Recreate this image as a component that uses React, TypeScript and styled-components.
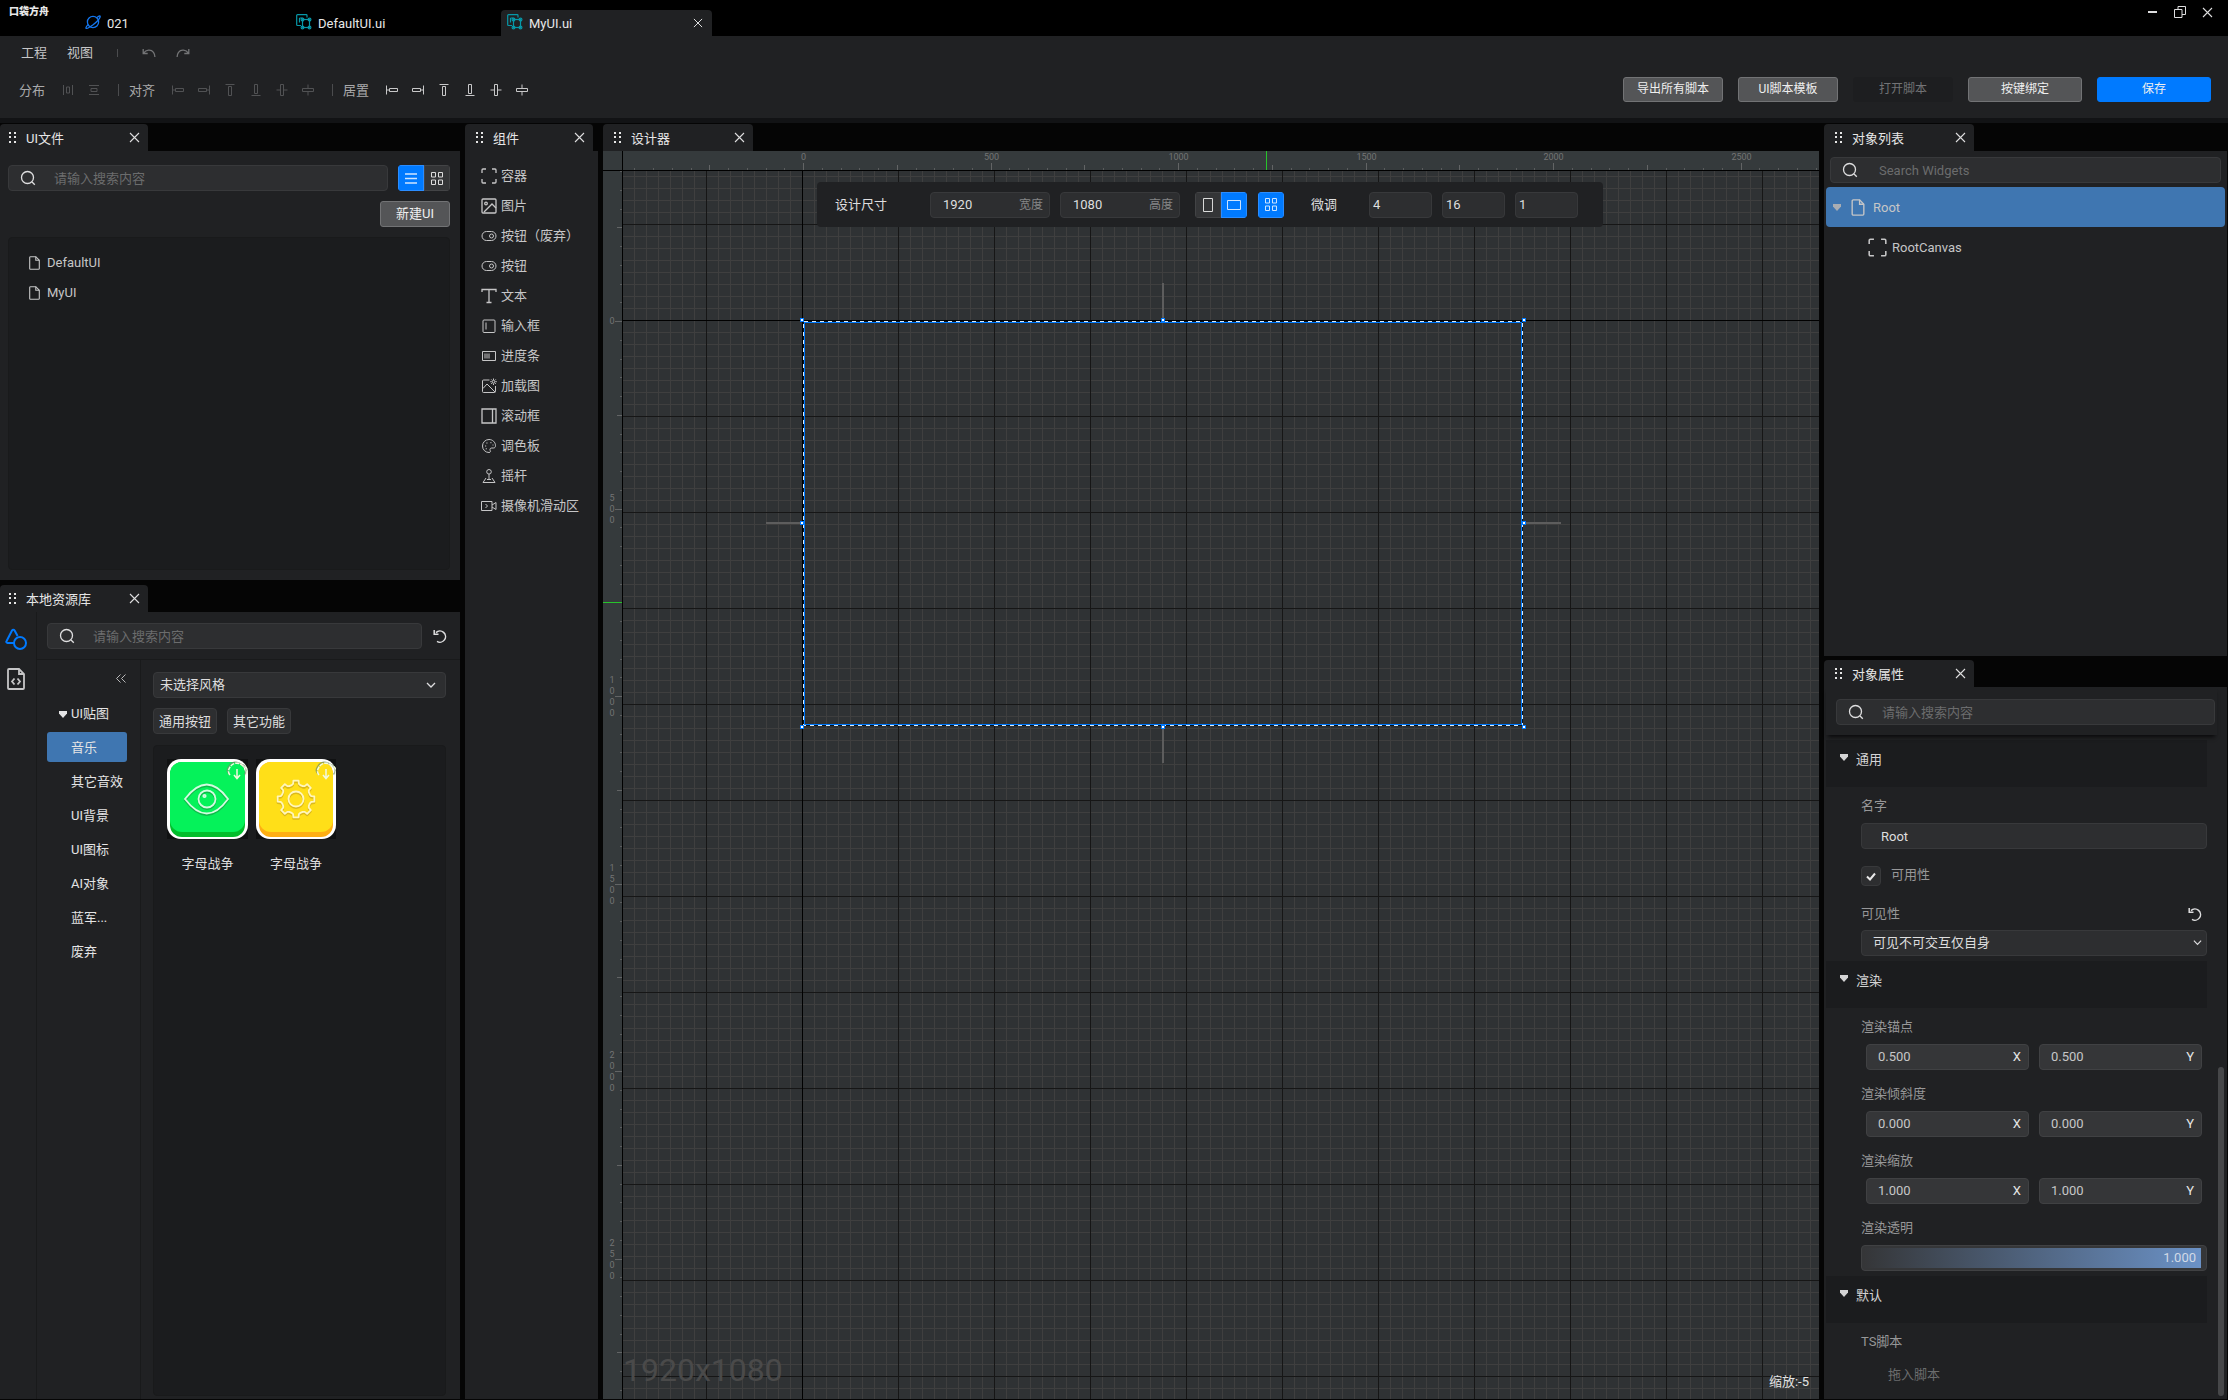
import React, { useEffect, useRef, useState } from 'react';
import styled, { createGlobalStyle, css } from 'styled-components';

const color = {
  app: '#050505',
  panel: '#202123',
  sunken: '#1b1c1e',
  line: '#191a1b',
  field: '#2d2e30',
  fieldLine: '#38393b',
  text: '#dededf',
  soft: '#c6c6c7',
  label: '#979798',
  faint: '#6b6c6d',
  blue: '#007aff',
  row: '#3f76b1',
};

const Global = createGlobalStyle`
  *, *::before, *::after { box-sizing: border-box; }
  body { margin: 0; background: ${color.app}; }
  body, button, input, select {
    font-family: Roboto, "Noto Sans CJK SC", sans-serif;
    font-size: 13px;
    line-height: 20px;
    color: ${color.text};
  }
  button { padding: 0; border: 0; background: none; cursor: pointer; }
  button:disabled { cursor: default; }
  ul { margin: 0; padding: 0; list-style: none; }
  svg { display: block; flex: none; }
`;

/* ---------- icons ---------- */

type IconProps = { w?: number; h?: number; box?: string; sw?: number; children?: React.ReactNode };

const Icon = ({ w = 14, h = w, box = `0 0 ${w} ${h}`, sw = 1, children }: IconProps) => (
  <svg width={w} height={h} viewBox={box} fill="none" stroke="currentColor" strokeWidth={sw} aria-hidden="true">
    {children}
  </svg>
);

const CloseIcon = ({ s = 11 }: { s?: number }) => (
  <Icon w={s} box="0 0 11 11" sw={1.1}><path d="M1 1l9 9M10 1l-9 9" /></Icon>
);
const GripIcon = () => (
  <svg width="8" height="11" viewBox="0 0 8 11" fill="currentColor" aria-hidden="true">
    {[0, 4, 9].map((y) => [0, 5].map((x) => <rect key={`${x}-${y}`} x={x} y={y} width="2" height="2" />))}
  </svg>
);
const SearchIcon = () => (
  <Icon w={16} sw={1.3}><circle cx="7.5" cy="7.5" r="6" /><path d="M12 12l2.8 2.8" /></Icon>
);
const ResetIcon = () => (
  <Icon w={14} sw={1.5}>
    <path d="M3 3.6A5.6 5.6 0 1 1 4 12.4" />
    <path d="M1.2 1v4.2h4.3" />
  </Icon>
);
const ChevronIcon = ({ s = 10 }: { s?: number }) => (
  <Icon w={s} h={s} box="0 0 10 10" sw={1.3}><path d="M1 3l4 4 4-4" /></Icon>
);
const TriangleIcon = () => (
  <svg width="8" height="7" viewBox="0 0 8 7" fill="currentColor" aria-hidden="true"><path d="M0 0h8v2.4L4 7 0 2.4z" /></svg>
);
const FileIcon = ({ w = 11, h = 14 }: { w?: number; h?: number }) => (
  <Icon w={w} h={h} box="0 0 11 14" sw={1.1}>
    <path d="M1.6.7h5.2l3.5 3.6v8.1a.9.9 0 0 1-.9.9H1.6a.9.9 0 0 1-.9-.9V1.6a.9.9 0 0 1 .9-.9z" />
    <path d="M6.8.7v3.6h3.5" />
  </Icon>
);
const PlanetIcon = () => (
  <Icon w={16} sw={1.3}>
    <circle cx="8" cy="8" r="5.6" />
    <path d="M12 3.500C14.300 1.600 15.500 1.500 15.100 3c-.5 2-3.500 5-7 7.800C4.800 13.200 1.500 15.200 1 14.200.7 13.500 1.600 12 3.300 10.400" />
  </Icon>
);
const UiFileIcon = () => (
  <Icon w={16} sw={1.2}>
    <path d="M5 11.500H1.500a.8.8 0 0 1-.8-.8V1.500a.8.8 0 0 1 .8-.8h8.700a.8.8 0 0 1 .8.8V3.500" />
    <path d="M3.500 8.500V4M3.500 4h3" />
    <rect x="6.500" y="5.500" width="7" height="8" />
    <circle cx="6.500" cy="5.500" r="1.400" /><circle cx="13.500" cy="5.500" r="1.400" />
    <circle cx="6.500" cy="13.500" r="1.400" /><circle cx="13.500" cy="13.500" r="1.400" />
  </Icon>
);
const UndoIcon = () => (
  <Icon w={14} h={10} sw={1.3}><path d="M1.200 1v4.500h4.500M1.600 5.200C4 1.600 9 1 11.500 4.300c1 1.400 1.400 3 1.400 4.700" /></Icon>
);
const RedoIcon = () => (
  <Icon w={14} h={10} sw={1.3}><path d="M12.800 1v4.500H8.300M12.400 5.200C10 1.600 5 1 2.500 4.300 1.500 5.700 1.100 7.300 1.100 9" /></Icon>
);

const alignPaths: Record<string, React.ReactNode> = {
  spreadH: <path d="M1.500 1v10M10.500 1v10M4.500 3h3v6h-3z" />,
  spreadV: <path d="M1 1.500h10M1 10.500h10M3 4.500h6v3H3z" />,
  left: <path d="M.5 1.500v9M3.500 4.500h8v3h-8z M.5 6h3" />,
  right: <path d="M11.500 1.500v9M.5 4.500h8v3h-8z M8.500 6h3" />,
  top: <path d="M1.500 .5h9M4.500 2.500h3v9h-3z" />,
  bottom: <path d="M1.500 11.500h9M4.500 .5h3v9h-3z" />,
  middle: <path d="M.5 6h4M7.500 6h4M4.500 .5h3v11h-3z" />,
  center: <path d="M6 .5v4M6 7.500v4M.5 4.500h11v3H.5z" />,
};
const AlignIcon = ({ kind }: { kind: string }) => <Icon w={12}>{alignPaths[kind]}</Icon>;

const FrameIcon = ({ s = 16 }: { s?: number }) => (
  <Icon w={s} box="0 0 16 16" sw={1.3}><path d="M1 5V2a1 1 0 0 1 1-1h3M11 1h3a1 1 0 0 1 1 1v3M15 11v3a1 1 0 0 1-1 1h-3M5 15H2a1 1 0 0 1-1-1v-3" /></Icon>
);
const ButtonIcon = () => (
  <Icon w={16}><rect x="1" y="3.500" width="14" height="9" rx="4.500" /><circle cx="10.500" cy="8" r="2" /></Icon>
);
const GridIcon = () => (
  <Icon w={12} h={13}><path d="M.5.500h4v4.500h-4zM7.500.500h4v4.500h-4zM.5 8h4v4.500h-4zM7.500 8h4v4.500h-4z" /></Icon>
);
const ListIcon = () => <Icon w={12} h={11} sw={1.5}><path d="M0 1h12M0 5.500h12M0 10h12" /></Icon>;

const widgets: { name: string; icon: React.ReactNode }[] = [
  { name: '容器', icon: <FrameIcon /> },
  {
    name: '图片',
    icon: <Icon w={16} sw={1.300}><rect x="1" y="1" width="14" height="14" rx="1" /><circle cx="5" cy="5.500" r="1.300" /><path d="M3 14l8-8 4 4" /></Icon>,
  },
  { name: '按钮（废弃）', icon: <ButtonIcon /> },
  { name: '按钮', icon: <ButtonIcon /> },
  { name: '文本', icon: <Icon w={16} sw={1.300}><path d="M1 4V1.500h14V4M8 1.500v13M5.500 14.500h5" /></Icon> },
  { name: '输入框', icon: <Icon w={16}><rect x="2" y="2" width="12" height="12.500" rx="1" /><path d="M5 4.500v7" /></Icon> },
  { name: '进度条', icon: <Icon w={16}><path d="M1.500 3.500h13v9h-13zM4 5.500v5M6 5.500v5M8 5.500v5" /></Icon> },
  {
    name: '加载图',
    icon: <Icon w={16}><path d="M8.500 2H2.500a1 1 0 0 0-1 1v10.500a1 1 0 0 0 1 1h11a1 1 0 0 0 1-1V8" /><path d="M2 10.500l4-4.500 8 8M12.500.500v1.500M12.500 5.500V7M9.200 3.700h1.500M14.300 3.700h1.500M10.200 1.400l1 1M14.800 1.400l-1 1M10.200 6l1-1M14.800 6l-1-1" /><circle cx="12.500" cy="3.700" r="1.300" /></Icon>,
  },
  { name: '滚动框', icon: <Icon w={16} sw={1.300}><path d="M1 1h14v14H1zM11.500 1v14" /></Icon> },
  {
    name: '调色板',
    icon: <Icon w={16}><path d="M8 1.500a6.500 6.500 0 1 0 0 13c1.600 0 1.700-1.200 1.200-2-.7-1.400.2-2.500 1.600-2.500h1.700c1.300 0 2-1 2-2.300C14.500 4.200 11.600 1.500 8 1.500z" /><path d="M4 8h1.200M5.300 5h1.200M9.300 4.700h1.200M4.700 10.800h1.200M11.500 7h1" /></Icon>,
  },
  {
    name: '摇杆',
    icon: <Icon w={16}><circle cx="8" cy="3.800" r="2.300" /><path d="M8 6.100v5M5 10l-3 4.500h12L11 10M6 11.500h4" /></Icon>,
  },
  {
    name: '摄像机滑动区',
    icon: <Icon w={16}><path d="M.500 3.500h10.500v9H.500zM11 7l4-2.500v7L11 9M4.500 6l2 2-2 2" /></Icon>,
  },
];

/* ---------- frame ---------- */

const Shell = styled.div`
  display: flex;
  flex-direction: column;
  height: 100vh;
  min-height: 900px;
  min-width: 1400px;
  background: ${color.app};
  overflow: hidden;
`;

const TitleBar = styled.header`
  display: flex;
  align-items: flex-end;
  height: 36px;
  background: #000;
`;
const Logo = styled.div`
  align-self: flex-start;
  width: 79px;
  padding: 4px 0 0 9px;
  font-size: 10px;
  line-height: 16px;
  font-weight: 900;
  color: #e8e8e8;
`;
const FileTab = styled.div<{ $active?: boolean; $tint: string }>`
  display: flex;
  align-items: center;
  gap: 6px;
  width: 211px;
  height: 26px;
  padding: 2px 9px 0 6px;
  border-radius: 4px 4px 0 0;
  color: #e8e8e8;
  background: ${(p) => (p.$active ? color.panel : 'transparent')};
  > svg { color: ${(p) => p.$tint}; margin-bottom: 4px; }
  > button { margin: 0 0 3px auto; }
`;
const WindowButtons = styled.div`
  display: flex;
  align-items: center;
  align-self: flex-start;
  gap: 16px;
  height: 24px;
  margin-left: auto;
  padding-right: 15px;
`;

const Head = styled.div`
  height: 87px;
  padding: 7px 17px 0 19px;
  border-bottom: 5px solid #121315;
  background: ${color.panel};
`;
const MenuRow = styled.nav`
  display: flex;
  align-items: center;
  gap: 20px;
  height: 20px;
  padding-left: 2px;
  color: ${color.soft};
  button { color: inherit; }
`;
const Rule = styled.span<{ $h: number }>`
  width: 1px;
  height: ${(p) => p.$h}px;
  background: #4b4c4e;
`;
const MenuRule = styled(Rule)`margin: 0 4px;`;
const HistoryButtons = styled.div`
  display: flex;
  gap: 20px;
  color: #737476;
`;
const ToolRow = styled.div`
  display: flex;
  align-items: center;
  height: 26px;
  margin-top: 14px;
`;
const ToolGroup = styled.div<{ $dim?: boolean }>`
  display: flex;
  align-items: center;
  color: #a9a9aa;
  > span { padding-top: 2px; }
  > div {
    display: flex;
    gap: 14px;
    margin-left: 17px;
    color: ${(p) => (p.$dim ? '#515254' : '#c8c8c9')};
  }
  > div button { color: inherit; &:disabled { color: inherit; } }
`;
const GroupRule = styled(Rule)`margin: 0 10px 0 18px;`;
const Actions = styled.div`
  display: flex;
  align-self: flex-start;
  gap: 15px;
  margin-left: auto;
`;
const PushButton = styled.button<{ $w: number; $primary?: boolean; $small?: boolean }>`
  width: ${(p) => p.$w}px;
  height: ${(p) => (p.$small ? 25 : 26)}px;
  border: 1px solid #727375;
  border-radius: 3px;
  background: #545557;
  color: #efefef;
  font-size: ${(p) => (p.$small ? 12 : 13)}px;
  line-height: 20px;
  ${(p) => p.$small && css`padding-bottom: 2px;`}
  ${(p) => p.$primary && css`background: ${color.blue}; border-color: ${color.blue};`}
  &:disabled { background: #1d1e20; border-color: #1d1e20; color: #727375; }
`;

const Workspace = styled.main`
  flex: 1;
  display: flex;
  gap: 5px;
  min-height: 0;
  padding: 1px 1px 1px 0;
`;
const Column = styled.div<{ $w?: number; $gap?: number }>`
  display: flex;
  flex-direction: column;
  gap: ${(p) => p.$gap ?? 5}px;
  min-width: 0;
  flex: ${(p) => (p.$w ? `0 0 ${p.$w}px` : '1 1 0')};
`;
const Panel = styled.section<{ $share?: number }>`
  flex: ${(p) => p.$share ?? 1} 1 0;
  display: flex;
  flex-direction: column;
  min-height: 0;
`;
const Tab = styled.div<{ $w: number; $edge?: boolean }>`
  display: flex;
  align-items: center;
  width: ${(p) => p.$w}px;
  height: 27px;
  flex: none;
  padding: 0 8px 0 ${(p) => (p.$edge ? 9 : 11)}px;
  border-radius: 4px 4px 0 0;
  background: ${color.panel};
  color: #e6e6e6;
  h2 { margin: 0 auto 0 9px; padding-top: 2px; font-size: 13px; font-weight: 400; }
`;
const Body = styled.div`
  flex: 1;
  min-height: 0;
  display: flex;
  flex-direction: column;
  background: ${color.panel};
`;

const PanelTab = ({ title, w, edge }: { title: string; w: number; edge?: boolean }) => (
  <Tab $w={w} $edge={edge}>
    <GripIcon />
    <h2>{title}</h2>
    <button type="button" aria-label={`关闭${title}`}><CloseIcon /></button>
  </Tab>
);

const fieldBox = css`
  height: 26px;
  border: 1px solid ${color.fieldLine};
  border-radius: 4px;
  background: ${color.field};
`;
const SearchBox = styled.label<{ $gap: number }>`
  ${fieldBox}
  flex: 1;
  display: flex;
  align-items: center;
  gap: ${(p) => p.$gap}px;
  min-width: 0;
  padding-left: 11px;
  input {
    flex: 1;
    min-width: 0;
    padding: 1px 0 0;
    border: 0;
    outline: 0;
    background: none;
    &::placeholder { color: ${color.faint}; opacity: 1; }
  }
`;
const Search = ({ hint = '请输入搜索内容', gap = 18 }: { hint?: string; gap?: number }) => (
  <SearchBox $gap={gap}>
    <SearchIcon />
    <input type="text" placeholder={hint} aria-label={hint} />
  </SearchBox>
);

const Segment = styled.div`
  display: flex;
  height: 26px;
  border-radius: 4px;
  overflow: hidden;
`;
const SegmentButton = styled.button<{ $on?: boolean }>`
  display: grid;
  place-items: center;
  width: 26px;
  height: 26px;
  border: 1px solid ${(p) => (p.$on ? '#2b8dff' : '#434446')};
  background: ${(p) => (p.$on ? color.blue : '#343537')};
  color: ${(p) => (p.$on ? '#cfe5ff' : '#dcdcdc')};
`;

/* ---------- UI files ---------- */

const FilesBody = styled(Body)`
  padding: 14px 10px 10px 8px;
  gap: 10px;
`;
const Row = styled.div<{ $end?: boolean }>`
  display: flex;
  align-items: center;
  gap: 10px;
  justify-content: ${(p) => (p.$end ? 'flex-end' : 'flex-start')};
`;
const Sunken = styled.div`
  flex: 1;
  min-height: 0;
  border: 1px solid ${color.line};
  border-radius: 4px;
  background: ${color.sunken};
`;
const FileList = styled.ul`
  padding: 10px 20px;
  li {
    display: flex;
    align-items: center;
    gap: 7px;
    height: 30px;
    color: ${color.soft};
  }
`;

const FilesPanel = () => (
  <Panel $share={456}>
    <PanelTab title="UI文件" w={148} edge />
    <FilesBody>
      <Row>
        <Search />
        <Segment>
          <SegmentButton type="button" $on aria-label="列表视图"><ListIcon /></SegmentButton>
          <SegmentButton type="button" aria-label="网格视图"><GridIcon /></SegmentButton>
        </Segment>
      </Row>
      <Row $end><PushButton type="button" $w={70}>新建UI</PushButton></Row>
      <Sunken>
        <FileList>
          {['DefaultUI', 'MyUI'].map((f) => <li key={f}><FileIcon />{f}</li>)}
        </FileList>
      </Sunken>
    </FilesBody>
  </Panel>
);

/* ---------- local library ---------- */

const LibraryBody = styled(Body)`flex-direction: row;`;
const Rail = styled.div`
  display: flex;
  flex-direction: column;
  align-items: center;
  gap: 18px;
  width: 37px;
  padding: 16px 4px 0 0;
  border-right: 1px solid ${color.line};
  color: ${color.soft};
`;
const RailButton = styled.button<{ $on?: boolean }>`
  color: ${(p) => (p.$on ? color.blue : color.soft)};
`;
const LibraryMain = styled.div`
  flex: 1;
  display: flex;
  flex-direction: column;
  min-width: 0;
`;
const LibrarySearch = styled.div`
  display: flex;
  align-items: center;
  gap: 11px;
  padding: 11px 13px 10px 10px;
  border-bottom: 1px solid ${color.line};
`;
const LibrarySplit = styled.div`
  flex: 1;
  display: flex;
  min-height: 0;
`;
const Tree = styled.div`
  display: flex;
  flex-direction: column;
  width: 104px;
  padding: 10px 0 0 10px;
  border-right: 1px solid ${color.line};
`;
const Collapse = styled.button`
  align-self: flex-end;
  height: 16px;
  margin: 0 14px 10px 0;
  color: #b8b8b9;
`;
const TreeItem = styled.button<{ $on?: boolean; $parent?: boolean }>`
  display: flex;
  align-items: center;
  gap: 4px;
  width: 80px;
  height: 30px;
  margin: 2px 0;
  padding: 2px 0 0 ${(p) => (p.$parent ? 12 : 24)}px;
  border-radius: 3px;
  background: ${(p) => (p.$on ? color.row : 'transparent')};
  text-align: left;
  white-space: nowrap;
  color: #e4e4e5;
`;
const LibraryContent = styled.div`
  flex: 1;
  display: flex;
  flex-direction: column;
  gap: 10px;
  min-width: 0;
  padding: 12px 14px 3px 12px;
`;
const SelectBox = styled.div<{ $inset: number }>`
  position: relative;
  select {
    ${fieldBox}
    appearance: none;
    display: block;
    width: 100%;
    padding: 0 24px 0 ${(p) => p.$inset}px;
  }
  svg { position: absolute; right: ${(p) => (p.$inset > 6 ? 5 : 10)}px; top: 8px; pointer-events: none; }
`;
const Chip = styled.button`
  ${fieldBox}
  width: 64px;
  padding-top: 2px;
`;
const Gallery = styled(Sunken)`
  display: flex;
  align-items: flex-start;
  gap: 8px;
  margin-top: 1px;
  padding: 13px;
`;
const Card = styled.figure`
  display: flex;
  flex-direction: column;
  align-items: center;
  gap: 15px;
  margin: 0;
  svg { background: #101112; }
`;

const CloudIcon = () => (
  <g fill="none" strokeWidth="1.500">
    <g stroke="#6f8f6a" transform="translate(-1 -1)" opacity=".7">
      <path d="M63 16a5.500 5.500 0 0 1-.500-7 8 8 0 0 1 13-2.500 6 6 0 0 1 3 10" />
    </g>
    <g stroke="#f2f9df">
      <path d="M63 16a5.500 5.500 0 0 1-.500-7 8 8 0 0 1 13-2.500 6 6 0 0 1 3 10" strokeDasharray="4 1" />
      <path d="M70 10v9M67 16l3 3.500 3-3.500" />
    </g>
  </g>
);
const EyeTile = () => (
  <svg width="81" height="80" viewBox="0 0 81 80" aria-hidden="true">
    <rect x="0" y="0" width="81" height="80" rx="14" fill="#fff" />
    <rect x="3" y="3" width="75" height="75" rx="12" fill="#02bd2b" />
    <rect x="3" y="3" width="75" height="70" rx="12" fill="#05f25a" />
    <g fill="none" stroke="#10b94b" strokeWidth="2" transform="translate(0 1.500)">
      <path d="M18 40Q40 11 61 40Q40 69 18 40z" /><circle cx="40" cy="40" r="8.500" />
    </g>
    <g fill="none" stroke="#d3fbe0" strokeWidth="1.800">
      <path d="M18 40Q40 11 61 40Q40 69 18 40z" /><circle cx="40" cy="40" r="8.500" />
      <circle cx="37.500" cy="37" r="1.200" />
    </g>
    <CloudIcon />
  </svg>
);
const gearPath = (() => {
  const points: string[] = [];
  for (let i = 0; i < 8; i += 1) {
    [[-0.3, 14.5], [-0.19, 15.5], [-0.14, 18.5], [0.14, 18.5], [0.19, 15.5], [0.3, 14.5]].forEach(([da, r]) => {
      const a = (i * Math.PI) / 4 + da;
      points.push(`${(40 + r * Math.sin(a)).toFixed(2)} ${(40 - r * Math.cos(a)).toFixed(2)}`);
    });
  }
  return `M${points.join('L')}z`;
})();
const GearTile = () => (
  <svg width="80" height="80" viewBox="0 0 80 80" aria-hidden="true">
    <rect x="0" y="0" width="80" height="80" rx="14" fill="#fff" />
    <rect x="3" y="3" width="74" height="75" rx="12" fill="#ffae12" />
    <rect x="3" y="3" width="74" height="70" rx="12" fill="#ffdf18" />
    <g fill="none" stroke="#dcb91a" strokeWidth="2" strokeLinejoin="round" transform="translate(0 1.500)">
      <path d={gearPath} /><circle cx="40" cy="40" r="7.500" />
    </g>
    <g fill="none" stroke="#fff6bd" strokeWidth="1.800" strokeLinejoin="round">
      <path d={gearPath} /><circle cx="40" cy="40" r="7.500" />
    </g>
    <CloudIcon />
  </svg>
);

const LibraryPanel = () => (
  <Panel $share={814}>
    <PanelTab title="本地资源库" w={148} edge />
    <LibraryBody>
      <Rail>
        <RailButton type="button" $on aria-label="素材">
          <Icon w={22} sw={2}>
            <path d="M9.500 15H2.500c-1 0-1.500-1-1-1.800L7 2.500c.6-1 2-1 2.600 0l3 5.500" />
            <circle cx="15" cy="15" r="6" />
          </Icon>
        </RailButton>
        <RailButton type="button" aria-label="脚本">
          <Icon w={18} h={22} sw={1.8}>
            <path d="M2 1h10l5 5v14a1 1 0 0 1-1 1H2a1 1 0 0 1-1-1V2a1 1 0 0 1 1-1zM12 1v5h5" />
            <path d="M7.500 10.500L5 13.500l2.500 3M10.500 10.500l2.500 3-2.500 3" />
          </Icon>
        </RailButton>
      </Rail>
      <LibraryMain>
        <LibrarySearch>
          <Search />
          <button type="button" aria-label="刷新"><ResetIcon /></button>
        </LibrarySearch>
        <LibrarySplit>
          <Tree>
            <Collapse type="button" aria-label="收起"><Icon w={10} h={9}><path d="M4.500.500l-4 4 4 4M9.500.500l-4 4 4 4" /></Icon></Collapse>
            <TreeItem type="button" $parent><TriangleIcon />UI贴图</TreeItem>
            <TreeItem type="button" $on>音乐</TreeItem>
            {['其它音效', 'UI背景', 'UI图标', 'AI对象', '蓝军...', '废弃'].map((n) => (
              <TreeItem type="button" key={n}>{n}</TreeItem>
            ))}
          </Tree>
          <LibraryContent>
            <SelectBox $inset={6}>
              <select aria-label="风格"><option>未选择风格</option></select>
              <ChevronIcon />
            </SelectBox>
            <Row>
              <Chip type="button">通用按钮</Chip>
              <Chip type="button">其它功能</Chip>
            </Row>
            <Gallery>
              <Card><EyeTile /><figcaption>字母战争</figcaption></Card>
              <Card><GearTile /><figcaption>字母战争</figcaption></Card>
            </Gallery>
          </LibraryContent>
        </LibrarySplit>
      </LibraryMain>
    </LibraryBody>
  </Panel>
);

/* ---------- widgets ---------- */

const WidgetList = styled.ul`
  padding: 10px 0 0 16px;
  li {
    display: flex;
    align-items: center;
    gap: 4px;
    height: 30px;
    white-space: nowrap;
    color: ${color.soft};
  }
`;

/* ---------- designer ---------- */

const Designer = styled.div`
  flex: 1;
  min-height: 0;
  display: grid;
  grid-template: 20px 1fr / 20px 1fr;
  overflow: hidden;
`;
const RulerCell = styled.div<{ $side?: boolean; $top?: boolean }>`
  min-width: 0;
  min-height: 0;
  overflow: hidden;
  border: 0 solid #000;
  border-right-width: ${(p) => (p.$side ? 1 : 0)}px;
  border-bottom-width: ${(p) => (p.$top ? 1 : 0)}px;
  background: #353a3c;
  text { font: 9px Roboto, sans-serif; fill: #737474; text-anchor: middle; }
`;
const Stage = styled.div`
  position: relative;
  min-width: 0;
  min-height: 0;
  overflow: hidden;
  background-color: #2f3234;
  background-image:
    linear-gradient(to right, #161616 1px, transparent 1px),
    linear-gradient(to bottom, #161616 1px, transparent 1px),
    linear-gradient(to right, #3f3f3f 1px, transparent 1px),
    linear-gradient(to bottom, #3f3f3f 1px, transparent 1px);
  background-size: 96px 96px, 96px 96px, 12px 12px, 12px 12px;
  background-position: 83px 53px, 83px 53px, 11px 5px, 11px 5px;
`;
const StageDrawing = styled.svg`
  position: absolute;
  inset: 0;
  width: 100%;
  height: 100%;
`;
const Watermark = styled.div`
  position: absolute;
  left: 0;
  bottom: 9px;
  font-size: 32px;
  line-height: 40px;
  color: #4a4a4a;
`;
const ZoomText = styled.div`
  position: absolute;
  right: 10px;
  bottom: 7px;
  color: #e2e2e2;
`;
const StageTools = styled.div`
  position: absolute;
  top: 11px;
  left: 50%;
  transform: translateX(-50%);
  margin-left: -11px;
  display: flex;
  align-items: center;
  gap: 10px;
  height: 45px;
  padding: 0 25px 0 18px;
  border-radius: 4px;
  background: ${color.panel};
  white-space: nowrap;
`;
const SizeField = styled.label`
  ${fieldBox}
  display: flex;
  align-items: center;
  width: 120px;
  padding: 0 6px 0 12px;
  font-size: 12px;
  color: #858687;
`;
const BareInput = styled.input`
  flex: 1;
  width: 100%;
  min-width: 0;
  padding: 0;
  border: 0;
  outline: 0;
  background: none;
`;
const StepInput = styled.input`
  ${fieldBox}
  width: 63px;
  padding: 0 3px;
  outline: 0;
`;
const ToolText = styled.span<{ $before?: number; $after: number }>`
  margin: 0 ${(p) => p.$after}px 0 ${(p) => p.$before ?? 0}px;
`;
const Switches = styled.div`
  display: flex;
  gap: 11px;
  margin-left: 5px;
`;

const SCALE = 0.375;
const ORIGIN = { x: 180, y: 150 };
const tickSize = (u: number) => (u % 500 === 0 ? 7 : u % 250 === 0 ? 5 : 2);
const tickTone = (u: number) => (u % 250 === 0 ? '#626465' : '#5a5c5d');

/* Ticks every 50 units that fit in a ruler of the given length. */
const ticks = (origin: number, length: number) => {
  const list: number[] = [];
  for (let u = -Math.floor(origin / SCALE / 50) * 50; origin + u * SCALE < length - 1; u += 50) list.push(u);
  return list;
};
const useSize = () => {
  const ref = useRef<HTMLDivElement>(null);
  const [size, setSize] = useState({ w: 1196, h: 1228 });
  useEffect(() => {
    const node = ref.current;
    if (!node) return undefined;
    const observer = new ResizeObserver(() => setSize({ w: node.clientWidth, h: node.clientHeight }));
    observer.observe(node);
    return () => observer.disconnect();
  }, []);
  return { ref, size };
};

const TopRuler = ({ length }: { length: number }) => (
  <svg width="100%" height="19" aria-label="水平标尺">
    {ticks(ORIGIN.x, length).map((u) => {
      const x = Math.round(ORIGIN.x + u * SCALE);
      return (
        <g key={u}>
          <rect x={x} y={19 - tickSize(u)} width="1" height={tickSize(u)} fill={tickTone(u)} />
          {u % 500 === 0 && <text x={x + 0.5} y="9">{u}</text>}
        </g>
      );
    })}
    <rect x="643" y="0" width="1" height="19" fill="#27c32b" />
  </svg>
);
const SideRuler = ({ length }: { length: number }) => (
  <svg width="19" height="100%" aria-label="垂直标尺">
    {ticks(ORIGIN.y, length).map((u) => {
      const y = Math.round(ORIGIN.y + u * SCALE);
      const digits = String(u).split('');
      return (
        <g key={u}>
          <rect y={y} x={19 - tickSize(u)} height="1" width={tickSize(u)} fill={tickTone(u)} />
          {u % 500 === 0 && (
            <text>
              {digits.map((d, i) => (
                <tspan key={i} x="9" y={y + 3 + (i - (digits.length - 1) / 2) * 11}>{d}</tspan>
              ))}
            </text>
          )}
        </g>
      );
    })}
    <rect x="0" y="431" width="19" height="1" fill="#27c32b" />
  </svg>
);

const frame = { left: 180, top: 150, right: 899, bottom: 554, midX: 540, midY: 352 };
const handles = [
  [frame.left - 1, frame.top - 1], [frame.midX, frame.top - 1], [frame.right + 2, frame.top - 1],
  [frame.left - 1, frame.midY], [frame.right + 2, frame.midY],
  [frame.left - 1, frame.bottom + 2], [frame.midX, frame.bottom + 2], [frame.right + 2, frame.bottom + 2],
];

const DesignerPanel = () => {
  const { ref, size } = useSize();
  return (
    <Panel>
      <PanelTab title="设计器" w={150} />
      <Designer>
        <RulerCell $side $top />
        <RulerCell $top><TopRuler length={size.w} /></RulerCell>
        <RulerCell $side><SideRuler length={size.h} /></RulerCell>
        <Stage ref={ref}>
          <StageDrawing shapeRendering="crispEdges" aria-hidden="true">
            <rect x="179" y="0" width="1" height="100%" fill="#000" />
            <rect x="0" y="149" width="100%" height="1" fill="#000" />
            <g fill="#5d5d5d">
              <rect x={frame.midX - 1} y="112" width="2" height="37" />
              <rect x={frame.midX - 1} y="556" width="2" height="36" />
              <rect x="143" y={frame.midY - 1} width="36" height="2" />
              <rect x="902" y={frame.midY - 1} width="36" height="2" />
            </g>
            <rect x="181.5" y="151.5" width="717" height="402" fill="none" stroke="#007aff" />
            <rect x="180.5" y="150.5" width="719" height="404" fill="none" stroke="#06131f" />
            <rect x="180.5" y="150.5" width="719" height="404" fill="none" stroke="#d9ecfb" strokeDasharray="4 4" />
            {handles.map(([x, y]) => (
              <g key={`${x}-${y}`}>
                <rect x={x - 2} y={y - 2} width="4" height="4" fill="#007aff" />
                <rect x={x - 1} y={y - 1} width="2" height="2" fill="#fff" />
              </g>
            ))}
          </StageDrawing>
          <StageTools>
            <ToolText $after={33}>设计尺寸</ToolText>
            <SizeField><BareInput defaultValue="1920" />宽度</SizeField>
            <SizeField><BareInput defaultValue="1080" />高度</SizeField>
            <Switches>
              <Segment>
                <SegmentButton type="button" aria-label="竖屏"><Icon w={10} h={14}><path d="M.5.500h9v13h-9z" /></Icon></SegmentButton>
                <SegmentButton type="button" $on aria-label="横屏"><Icon w={14} h={10}><path d="M.5.500h13v9H.5z" /></Icon></SegmentButton>
              </Segment>
              <Segment>
                <SegmentButton type="button" $on aria-label="网格"><GridIcon /></SegmentButton>
              </Segment>
            </Switches>
            <ToolText $before={17} $after={22}>微调</ToolText>
            <StepInput aria-label="微调 1" defaultValue="4" />
            <StepInput aria-label="微调 2" defaultValue="16" />
            <StepInput aria-label="微调 3" defaultValue="1" />
          </StageTools>
          <Watermark>1920x1080</Watermark>
          <ZoomText>缩放:-5</ZoomText>
        </Stage>
      </Designer>
    </Panel>
  );
};

/* ---------- object list ---------- */

const ObjectBody = styled(Body)`padding: 6px 2px 0;`;
const ObjectSearch = styled.div`
  display: flex;
  padding: 0 4px;
  margin-bottom: 4px;
`;
const ObjectRow = styled.div<{ $on?: boolean; $child?: boolean }>`
  display: flex;
  align-items: center;
  gap: ${(p) => (p.$child ? 5 : 8)}px;
  height: 40px;
  padding-left: ${(p) => (p.$child ? 42 : 7)}px;
  border-radius: 4px;
  background: ${(p) => (p.$on ? color.row : 'transparent')};
  color: ${color.soft};
  > svg:first-child { color: ${(p) => (p.$child ? color.soft : '#a9adb3')}; margin-right: ${(p) => (p.$child ? 0 : 2)}px; }
  > span { padding-top: 2px; }
`;

/* ---------- object properties ---------- */

const PropSearch = styled.div`
  position: relative;
  display: flex;
  margin: 0 10px 0 2px;
  padding: 12px 2px 10px 10px;
  box-shadow: 0 4px 4px -2px #0a0a0b;
`;
const PropScroll = styled.div`
  flex: 1;
  display: flex;
  justify-content: space-between;
  min-height: 0;
  padding: 5px 3px 0 2px;
  overflow: hidden;
`;
const PropList = styled.div`
  flex: 1;
  min-width: 0;
  margin-right: 11px;
`;
const Thumb = styled.div`
  align-self: flex-end;
  width: 6px;
  height: 330px;
  max-height: 50%;
  margin-bottom: 3px;
  border-radius: 3px;
  background: #464749;
`;
const SectionHead = styled.h3`
  display: flex;
  gap: 8px;
  height: 47px;
  margin: 0;
  padding: 10px 0 0 14px;
  background: ${color.sunken};
  font-size: 13px;
  font-weight: 400;
  color: #d4d4d5;
  svg { margin-top: 4px; }
`;
const Fields = styled.div`
  padding: 9px 0 5px 35px;
`;
const Caption = styled.div<{ $tight?: boolean }>`
  display: flex;
  align-items: center;
  justify-content: space-between;
  height: 20px;
  margin-bottom: 7px;
  color: ${color.label};
  ${(p) => p.$tight && css`
    padding-right: 5px;
    margin-bottom: 6px;
  `}
`;
const TextInput = styled.input`
  ${fieldBox}
  display: block;
  width: 100%;
  padding: 0 19px;
  outline: 0;
`;
const CheckRow = styled.label`
  display: flex;
  align-items: center;
  gap: 10px;
  height: 20px;
  margin: 17px 0 18px;
  color: ${color.label};
  span { padding-bottom: 2px; }
  input {
    appearance: none;
    width: 20px;
    height: 20px;
    margin: 0;
    border: 1px solid ${color.fieldLine};
    border-radius: 4px;
    background: ${color.field}
      url("data:image/svg+xml,%3Csvg xmlns='http://www.w3.org/2000/svg' width='10' height='9' fill='none' stroke='%23e8e8e8' stroke-width='2'%3E%3Cpath d='M1 4.500l3 3L9 1.500'/%3E%3C/svg%3E")
      center no-repeat;
  }
`;
const PairRow = styled.div`
  display: flex;
  gap: 10px;
  padding: 0 5px;
  margin-bottom: 14px;
`;
const AxisField = styled.label`
  ${fieldBox}
  flex: 1;
  display: flex;
  align-items: center;
  min-width: 0;
  padding: 0 7px 0 11px;
  background: #353638;
  border-color: #404143;
  color: #e6e6e6;
  input { color: ${color.soft}; }
`;
const Slider = styled.div`
  position: relative;
  input {
    ${fieldBox}
    appearance: none;
    display: block;
    width: 100%;
    margin: 0;
    background:
      linear-gradient(to right, #353638, #6b92c7) 2px 2px / calc(100% - 7px) 20px no-repeat,
      #353638;
    border-color: #404143;
  }
  input::-webkit-slider-thumb { appearance: none; width: 1px; height: 20px; }
  output { position: absolute; right: 11px; top: 3px; color: #d2dae6; }
`;
const DropHint = styled.div`
  padding: 6px 0 0 27px;
  color: ${color.faint};
`;

const Section = ({ title, children }: { title: string; children: React.ReactNode }) => (
  <section>
    <SectionHead><TriangleIcon />{title}</SectionHead>
    <Fields>{children}</Fields>
  </section>
);
const Pair = ({ label, value }: { label: string; value: string }) => (
  <>
    <Caption>{label}</Caption>
    <PairRow>
      {['X', 'Y'].map((axis) => (
        <AxisField key={axis}>
          <BareInput aria-label={`${label} ${axis}`} defaultValue={value} />
          {axis}
        </AxisField>
      ))}
    </PairRow>
  </>
);

const PropertiesPanel = () => (
  <Panel $share={739}>
    <PanelTab title="对象属性" w={150} />
    <Body>
      <PropSearch><Search /></PropSearch>
      <PropScroll>
        <PropList>
          <Section title="通用">
            <Caption as="label" htmlFor="prop-name">名字</Caption>
            <TextInput id="prop-name" defaultValue="Root" />
            <CheckRow><input type="checkbox" defaultChecked /><span>可用性</span></CheckRow>
            <Caption $tight>
              <label htmlFor="prop-visible">可见性</label>
              <button type="button" aria-label="重置可见性"><ResetIcon /></button>
            </Caption>
            <SelectBox $inset={11}>
              <select id="prop-visible"><option>可见不可交互仅自身</option></select>
              <ChevronIcon s={9} />
            </SelectBox>
          </Section>
          <Section title="渲染">
            <Pair label="渲染锚点" value="0.500" />
            <Pair label="渲染倾斜度" value="0.000" />
            <Pair label="渲染缩放" value="1.000" />
            <Caption as="label" htmlFor="prop-alpha">渲染透明</Caption>
            <Slider>
              <input id="prop-alpha" type="range" min="0" max="1" step="0.001" defaultValue="1" />
              <output htmlFor="prop-alpha">1.000</output>
            </Slider>
          </Section>
          <Section title="默认">
            <Caption>TS脚本</Caption>
            <DropHint>拖入脚本</DropHint>
          </Section>
        </PropList>
        <Thumb />
      </PropScroll>
    </Body>
  </Panel>
);

/* ---------- app ---------- */

const Tools = ({ label, kinds, dim }: { label: string; kinds: string[]; dim?: boolean }) => (
  <ToolGroup $dim={dim}>
    <span>{label}</span>
    <div>
      {kinds.map((k) => (
        <button type="button" key={k} disabled={dim} aria-label={`${label} ${k}`}><AlignIcon kind={k} /></button>
      ))}
    </div>
  </ToolGroup>
);
const sides = ['left', 'right', 'top', 'bottom', 'middle', 'center'];

export default function App() {
  return (
    <Shell>
      <Global />
      <TitleBar>
        <Logo>口袋方舟</Logo>
        <FileTab $tint="#1477f0"><PlanetIcon />021</FileTab>
        <FileTab $tint="#0798a8"><UiFileIcon />DefaultUI.ui</FileTab>
        <FileTab $tint="#0798a8" $active>
          <UiFileIcon />MyUI.ui
          <button type="button" aria-label="关闭 MyUI.ui"><CloseIcon s={10} /></button>
        </FileTab>
        <WindowButtons>
          <button type="button" aria-label="最小化"><Icon w={10} h={12} sw={2}><path d="M0 6h9" /></Icon></button>
          <button type="button" aria-label="还原"><Icon w={12}><path d="M.5 3.500h7.500v8H.5zM4 3.500v-3h7.500v8H8" /></Icon></button>
          <button type="button" aria-label="关闭"><CloseIcon s={11} /></button>
        </WindowButtons>
      </TitleBar>
      <Head>
        <MenuRow>
          <button type="button">工程</button>
          <button type="button">视图</button>
          <MenuRule $h={8} />
          <HistoryButtons>
            <button type="button" aria-label="撤销"><UndoIcon /></button>
            <button type="button" aria-label="重做"><RedoIcon /></button>
          </HistoryButtons>
        </MenuRow>
        <ToolRow>
          <Tools label="分布" kinds={['spreadH', 'spreadV']} dim />
          <GroupRule $h={12} />
          <Tools label="对齐" kinds={sides} dim />
          <GroupRule $h={12} />
          <Tools label="居置" kinds={sides} />
          <Actions>
            <PushButton type="button" $small $w={100}>导出所有脚本</PushButton>
            <PushButton type="button" $small $w={100}>UI脚本模板</PushButton>
            <PushButton type="button" $small $w={100} disabled>打开脚本</PushButton>
            <PushButton type="button" $small $w={114}>按键绑定</PushButton>
            <PushButton type="button" $small $w={114} $primary>保存</PushButton>
          </Actions>
        </ToolRow>
      </Head>
      <Workspace>
        <Column $w={460}>
          <FilesPanel />
          <LibraryPanel />
        </Column>
        <Column $w={133}>
          <Panel>
            <PanelTab title="组件" w={128} />
            <Body>
              <WidgetList>
                {widgets.map((w) => <li key={w.name}>{w.icon}{w.name}</li>)}
              </WidgetList>
            </Body>
          </Panel>
        </Column>
        <Column><DesignerPanel /></Column>
        <Column $w={403} $gap={4}>
          <Panel $share={532}>
            <PanelTab title="对象列表" w={150} />
            <ObjectBody>
              <ObjectSearch><Search hint="Search Widgets" gap={21} /></ObjectSearch>
              <ObjectRow $on><TriangleIcon /><FileIcon w={14} h={17} /><span>Root</span></ObjectRow>
              <ObjectRow $child><FrameIcon s={19} /><span>RootCanvas</span></ObjectRow>
            </ObjectBody>
          </Panel>
          <PropertiesPanel />
        </Column>
      </Workspace>
    </Shell>
  );
}
